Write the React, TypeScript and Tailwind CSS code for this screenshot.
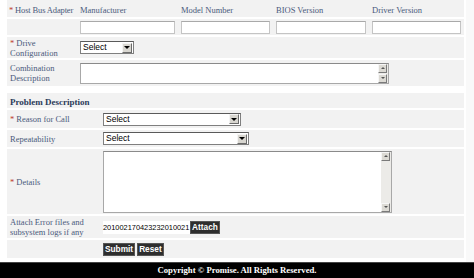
import React from 'react';

const labelCls = "font-['Liberation_Serif',serif] text-[8.5px] leading-[10px] text-[#4a5a7c] whitespace-nowrap";

const Star = () => <span className="text-[#c0392b] mr-[2px]">*</span>;

// old windows style dropdown
const FakeSelect: React.FC<{ w: string }> = ({ w }) => (
  <div className={`${w} h-[13px] flex items-center border border-[#7f7f7f] border-t-[#5a5a5a] bg-white`}>
    <span className="flex-1 pl-[2px] font-['Liberation_Sans',sans-serif] text-[8.5px] leading-[11px] text-black">Select</span>
    <div className="w-[10px] h-[10px] mr-[1px] flex items-center justify-center bg-[#d8d6d0] border border-[#f4f4f4] border-r-[#6b6b6b] border-b-[#6b6b6b]">
      <div className="w-0 h-0 border-l-[3px] border-r-[3px] border-t-[3px] border-l-transparent border-r-transparent border-t-black" />
    </div>
  </div>
);

const ScrollBtn: React.FC<{ up?: boolean }> = ({ up }) => (
  <div className="w-[9px] h-[9px] flex items-center justify-center bg-[#dcdad4] border border-[#f6f6f6] border-r-[#7a7a7a] border-b-[#7a7a7a]">
    <div className={`w-0 h-0 border-l-[2px] border-r-[2px] border-l-transparent border-r-transparent ${up ? 'border-b-[2px] border-b-[#555]' : 'border-t-[2px] border-t-[#555]'}`} />
  </div>
);

const FakeTextarea: React.FC<{ w: string; h: string }> = ({ w, h }) => (
  <div className={`${w} ${h} flex bg-white border border-[#a8a8a8] border-t-[#8a8a8a]`}>
    <div className="flex-1" />
    <div className="w-[10px] flex flex-col justify-between bg-[#ecebe8]">
      <ScrollBtn up />
      <ScrollBtn />
    </div>
  </div>
);

const TextInput = () => (
  <div className="h-[13px] mx-[3px] bg-white border border-[#c4c4c4] border-t-[#a9a9a9]" />
);

const DarkBtn: React.FC<{ children: React.ReactNode }> = ({ children }) => (
  <div className="h-[13px] px-[1px] flex items-center bg-[#2e2e2e] border border-[#555] font-['Liberation_Sans',sans-serif] font-bold text-[8.3px] leading-[10px] text-white">
    {children}
  </div>
);

export default function App() {
  return (
    <div className="w-[474px] h-[278px] bg-white flex flex-col overflow-hidden">
      <div className="flex-1 flex">
        <div className="w-[466px] pl-[7px] pr-[2px] flex flex-col">
          {/* hardware section */}
          <div className="grid grid-cols-[70px_101px_95px_96px_95px] gap-y-[2px]">
            <div className={`${labelCls} h-[17px] bg-[#f2f2f2] pl-[2px] pt-[2px] flex items-center tracking-[-0.15px]`}><Star />Host Bus Adapter</div>
            <div className={`${labelCls} h-[17px] bg-[#f2f2f2] pl-[3px] pt-[2px] flex items-center`}>Manufacturer</div>
            <div className={`${labelCls} h-[17px] bg-[#f2f2f2] pl-[3px] pt-[2px] flex items-center`}>Model Number</div>
            <div className={`${labelCls} h-[17px] bg-[#f2f2f2] pl-[3px] pt-[2px] flex items-center`}>BIOS Version</div>
            <div className={`${labelCls} h-[17px] bg-[#f2f2f2] pl-[3px] pt-[2px] flex items-center`}>Driver Version</div>

            <div className="h-[16px] bg-[#f2f2f2]" />
            <div className="h-[16px] bg-[#f2f2f2] flex flex-col justify-center"><TextInput /></div>
            <div className="h-[16px] bg-[#f2f2f2] flex flex-col justify-center"><TextInput /></div>
            <div className="h-[16px] bg-[#f2f2f2] flex flex-col justify-center"><TextInput /></div>
            <div className="h-[16px] bg-[#f2f2f2] flex flex-col justify-center"><TextInput /></div>

            <div className={`${labelCls} h-[21px] bg-[#f2f2f2] pl-[3px] flex flex-col justify-center`}>
              <span><Star />Drive</span>
              <span>Configuration</span>
            </div>
            <div className="col-span-4 h-[21px] bg-[#f2f2f2] pl-[3px] flex items-center">
              <FakeSelect w="w-[54px]" />
            </div>

            <div className={`${labelCls} h-[26px] bg-[#f2f2f2] pl-[3px] flex flex-col justify-center`}>
              <span>Combination</span>
              <span>Description</span>
            </div>
            <div className="col-span-4 h-[26px] bg-[#f2f2f2] pl-[3px] flex items-center">
              <FakeTextarea w="w-[309px]" h="h-[21px]" />
            </div>
          </div>

          <div className="h-[7px]" />

          {/* problem section */}
          <div className="grid grid-cols-[93px_364px] gap-y-[2px]">
            <div className="col-span-2 h-[15px] bg-[#f2f2f2] pl-[3px] flex items-end font-['Liberation_Serif',serif] font-bold text-[9px] leading-[12px] text-[#2c3b5a]">
              Problem Description
            </div>

            <div className={`${labelCls} h-[18px] bg-[#f2f2f2] pl-[3px] flex items-center`}><Star />Reason for Call</div>
            <div className="h-[18px] bg-[#f2f2f2] pl-[3px] flex items-center"><FakeSelect w="w-[138px]" /></div>

            <div className={`${labelCls} h-[17px] bg-[#f2f2f2] pl-[3px] flex items-center`}>Repeatability</div>
            <div className="h-[17px] bg-[#f2f2f2] pl-[3px] flex items-center"><FakeSelect w="w-[146px]" /></div>

            <div className={`${labelCls} h-[65px] bg-[#f2f2f2] pl-[3px] flex items-center`}><Star />Details</div>
            <div className="h-[65px] bg-[#f2f2f2] pl-[3px] flex items-center"><FakeTextarea w="w-[289px]" h="h-[62px]" /></div>

            <div className={`${labelCls} h-[22px] bg-[#f2f2f2] pl-[3px] flex flex-col justify-center`}>
              <span>Attach Error files and</span>
              <span>subsystem logs if any</span>
            </div>
            <div className="h-[22px] bg-[#f2f2f2] pl-[3px] flex items-center">
              <div className="w-[87px] h-[13px] whitespace-nowrap bg-white font-['Liberation_Sans',sans-serif] text-[7.4px] leading-[13px] text-black">201002170423232010021</div>
              <DarkBtn>Attach</DarkBtn>
            </div>

            <div className="h-[18px] bg-[#f2f2f2]" />
            <div className="h-[18px] bg-[#f2f2f2] pl-[3px] flex items-center gap-[2px]">
              <DarkBtn>Submit</DarkBtn>
              <DarkBtn>Reset</DarkBtn>
            </div>
          </div>
        </div>
        <div className="flex-1 bg-[#f9f9f9]" />
      </div>

      <div className="h-[16px] bg-black border-t border-[#444] flex items-center justify-center font-['Liberation_Serif',serif] font-bold text-[8.7px] text-white">
        Copyright © Promise. All Rights Reserved.
      </div>
    </div>
  );
}
